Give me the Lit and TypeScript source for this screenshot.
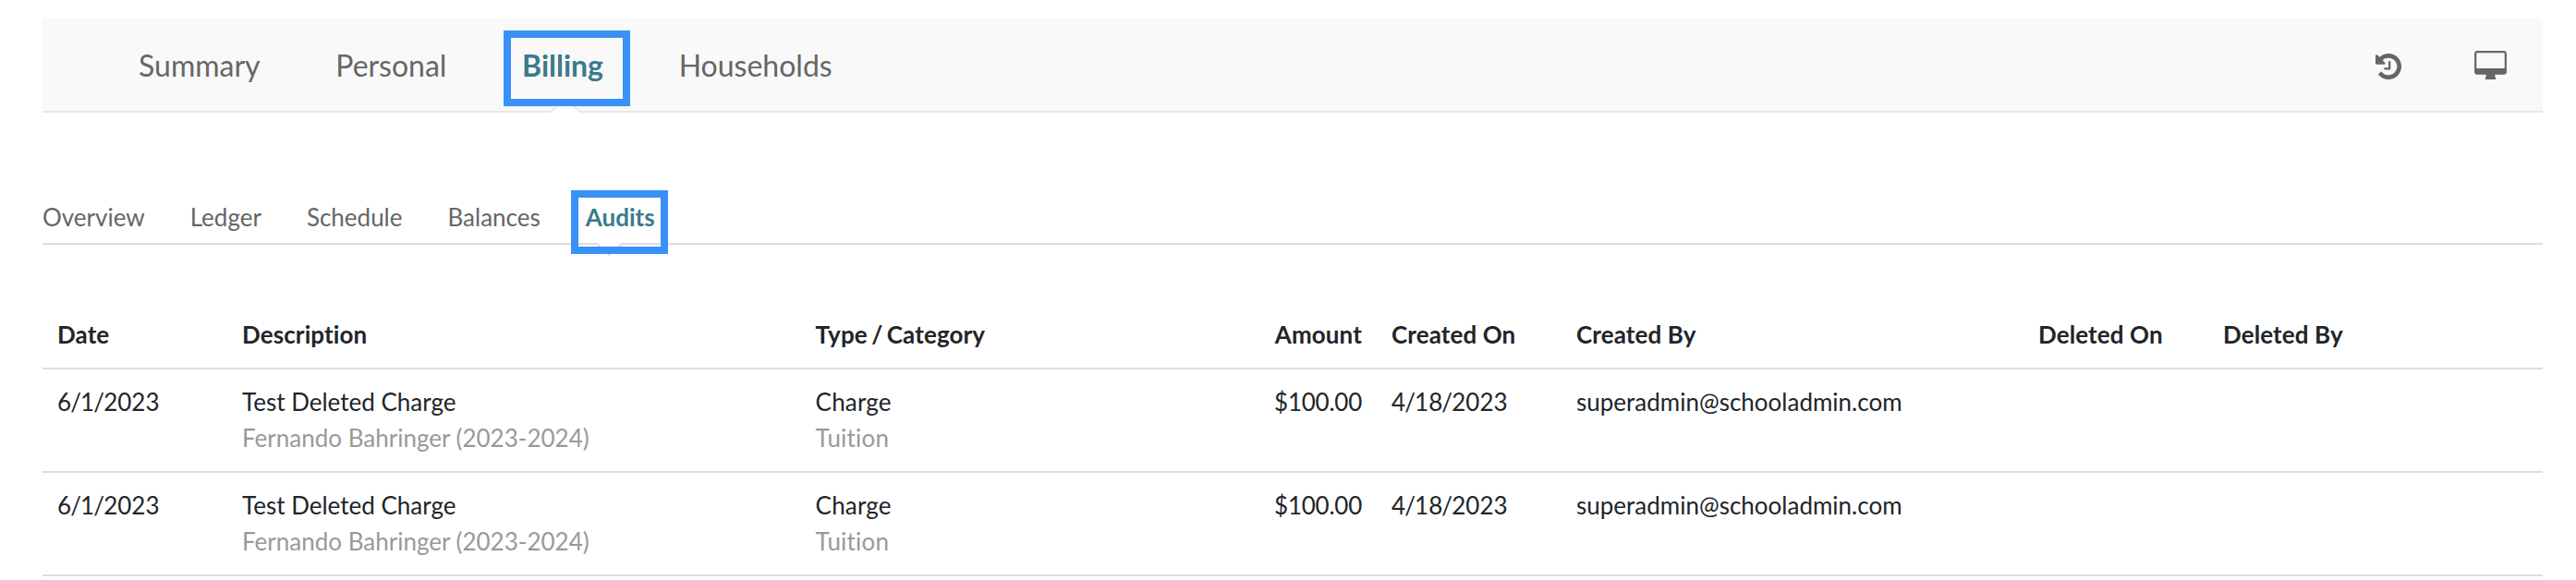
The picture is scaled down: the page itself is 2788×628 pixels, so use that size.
import { LitElement, html, css, svg } from "lit";
import { customElement } from "lit/decorators.js";

const sections = ["Summary", "Personal", "Billing", "Households"];
const tabs = ["Overview", "Ledger", "Schedule", "Balances", "Audits"];
const columns = ["Date", "Description", "Type / Category", "Amount", "Created On", "Created By", "Deleted On", "Deleted By"];
const charge = {
  date: "6/1/2023",
  title: "Test Deleted Charge",
  person: "Fernando Bahringer (2023-2024)",
  type: "Charge",
  category: "Tuition",
  amount: "$100.00",
  createdOn: "4/18/2023",
  createdBy: "superadmin@schooladmin.com",
};
const rows = [charge, charge];

/* Sets slashes a little tighter than the font's own advance. */
const slashed = (text: string) =>
  text.split("/").map((part, i) => (i ? html`<span class="slash">/</span>${part}` : part));

@customElement("app-root")
export class AppRoot extends LitElement {
  static styles = css`
    :host {
      display: block;
      box-sizing: border-box;
      height: 628px;
      padding: 20px 36px 0 46px;
      overflow: hidden;
      background: #fff;
      color: #212529;
      font: 26px/39px Lato, sans-serif;
      font-variant-ligatures: none;
    }
    .bar {
      display: flex;
      justify-content: space-between;
      box-sizing: border-box;
      height: 102px;
      padding: 0 39.5px 0 104px;
      background: #f9f9f9;
      border-bottom: 2px solid #e7e7e7;
      color: #666;
    }
    .sections {
      display: flex;
      gap: 81.7px;
      font-size: 32px;
      line-height: 102px;
    }
    .tabs {
      display: flex;
      gap: 49px;
      height: 57px;
      margin-top: 84px;
      border-bottom: 2px solid #ddd;
      color: #666;
      line-height: 58px;
    }
    .item { position: relative; white-space: nowrap; }
    .active { color: #3a7a8c; font-weight: 700; }
    .mark {
      position: absolute;
      box-sizing: border-box;
      border: 8px solid #3891f7;
    }
    .sections .mark { left: -20px; top: 13px; width: 137px; height: 82px; }
    .tabs .mark { left: -16px; top: 0; width: 105px; height: 69px; }
    .caret { position: absolute; display: block; }
    .sections .caret { left: 31px; top: 87px; }
    .tabs .caret { left: 11px; top: 57px; }
    .tools { display: flex; align-items: center; gap: 79px; }
    .history { width: 28px; height: 28px; margin-top: 3px; }
    .monitor { width: 35px; height: 31px; }
    .table { margin-top: 62px; }
    .row {
      display: grid;
      grid-template-columns: 200px 620.6px 423.4px 200px 200px 500px 200px 1fr;
      border-bottom: 2px solid #ddd;
    }
    .cell { padding: 16px; white-space: nowrap; }
    .head { font-weight: 700; letter-spacing: 0.1px; }
    .slash { margin: 0 -0.9px; }
    .head .slash { margin: 0 -2px; }
    .right { text-align: right; }
    .amount { letter-spacing: -0.25px; }
    .type { letter-spacing: 0.2px; }
    .sub { color: #999; }
  `;

  private caretUp = svg`<path d="M0 15 L16 1 L32 15 Z" fill="#fff"/><path d="M0 14 L16 1 L32 14" fill="none" stroke="#e7e7e7" stroke-width="2"/>`;
  private caretDown = svg`<path d="M0 0 H29 L14.5 13 Z" fill="#fff"/><path d="M0 0 L14.5 13 L29 0" fill="none" stroke="#ddd" stroke-width="2"/>`;

  render() {
    return html`
      <div class="bar">
        <div class="sections">
          ${sections.map((s) => s === "Billing"
            ? html`<div class="item active">${s}<svg class="caret" width="32" height="15">${this.caretUp}</svg><div class="mark"></div></div>`
            : html`<div class="item">${s}</div>`)}
        </div>
        <div class="tools">
          <svg class="history" viewBox="0 0 1536 1536" fill="#666">
            <path d="M1536 768q0 156-61 298t-164 245-245 164-298 61q-172 0-327-72.500t-264-204.500q-7-10-6.500-22.500t8.500-20.500l137-138q10-9 25-9 16 2 23 12 73 95 179 147t225 52q104 0 198.500-40.500t163.500-109.500 109.500-163.500 40.500-198.500-40.500-198.500-109.500-163.500-163.500-109.500-198.500-40.500q-98 0-188 35.500t-160 101.500l137 138q31 30 14 69-17 40-59 40h-448q-26 0-45-19t-19-45v-448q0-42 40-59 39-17 69 14l130 129q107-101 244.500-156.500t284.500-55.500q156 0 298 61t245 164 164 245 61 298zm-640-288v448q0 14-9 23t-23 9h-320q-14 0-23-9t-9-23v-64q0-14 9-23t23-9h224v-352q0-14 9-23t23-9h64q14 0 23 9t9 23z"/>
          </svg>
          <svg class="monitor" viewBox="0 0 36 32" fill="#666">
            <path fill-rule="evenodd" d="M3 0H33Q36 0 36 3V23.500Q36 26.500 33 26.500H23V29Q23 30 24 30.500V32H12V30.500Q13 30 13 29V26.500H3Q0 26.500 0 23.500V3Q0 0 3 0ZM3 2.300Q2.300 2.300 2.300 3V19.500H33.700V3Q33.700 2.300 33 2.300Z"/>
          </svg>
        </div>
      </div>
      <div class="tabs">
        ${tabs.map((t) => t === "Audits"
          ? html`<div class="item active">${t}<svg class="caret" width="29" height="15">${this.caretDown}</svg><div class="mark"></div></div>`
          : html`<div class="item">${t}</div>`)}
      </div>
      <div class="table">
        <div class="row head">
          ${columns.map((c) => html`<div class="cell ${c === "Amount" ? "right" : ""}">${slashed(c)}</div>`)}
        </div>
        ${rows.map((r) => html`
          <div class="row">
            <div class="cell">${slashed(r.date)}</div>
            <div class="cell">${r.title}<div class="sub">${r.person}</div></div>
            <div class="cell type">${r.type}<div class="sub">${r.category}</div></div>
            <div class="cell right amount">${r.amount}</div>
            <div class="cell">${slashed(r.createdOn)}</div>
            <div class="cell">${r.createdBy}</div>
            <div class="cell"></div>
            <div class="cell"></div>
          </div>`)}
      </div>
    `;
  }
}
